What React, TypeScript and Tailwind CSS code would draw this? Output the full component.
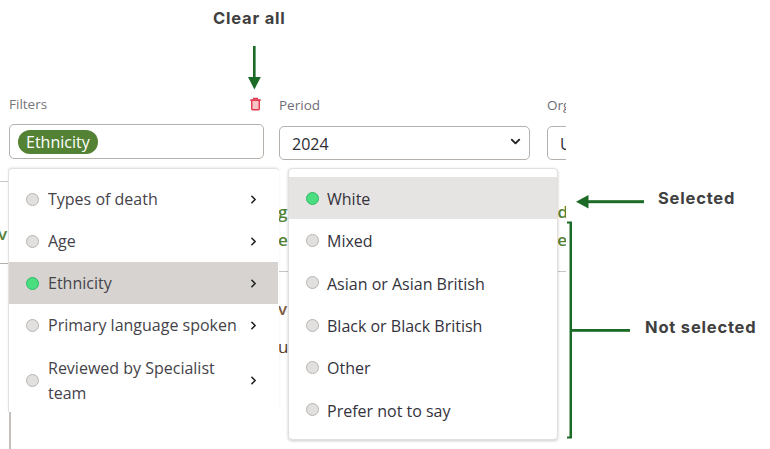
import { ChevronDown, ChevronRight } from "lucide-react";

const filters = [
  { label: "Types of death" },
  { label: "Age" },
  { label: "Ethnicity", active: true },
  { label: "Primary language spoken" },
  { label: "Reviewed by Specialist team", tall: true },
];

const options = [
  { label: "White", active: true },
  { label: "Mixed" },
  { label: "Asian or Asian British" },
  { label: "Black or Black British" },
  { label: "Other" },
  { label: "Prefer not to say" },
];

function Dot({ active }: { active?: boolean }) {
  return (
    <span
      className={
        active
          ? "w-[13px] h-[13px] shrink-0 rounded-full border border-[#2fb865] bg-[#4ade80]"
          : "w-[13px] h-[13px] shrink-0 rounded-full border border-[#b8b4b0] bg-[#e2e0de]"
      }
    />
  );
}

function TrashIcon() {
  return (
    <svg width="11" height="14" viewBox="0 0 12 14" fill="none" stroke="#e23a4e" strokeWidth="1.6">
      <path d="M4 2.4V0.9h4v1.5" />
      <path d="M0.2 2.8h11.6" />
      <path d="M1.9 3h8.2v9.2a1 1 0 0 1-1 1H2.9a1 1 0 0 1-1-1z" fill="#f8c4ca" />
    </svg>
  );
}

function PickSelect({ value }: { value: string }) {
  return (
    <div className="relative mt-[13px]">
      <select className="block w-full h-[34px] pl-[12px] pt-[2px] appearance-none bg-white border-[1.5px] border-[#b5b0ac] rounded-[5px] text-[16px] text-[#2c2c34]">
        <option>{value}</option>
      </select>
      <ChevronDown size={15} strokeWidth={3} className="absolute right-[7px] top-[8px] text-[#222]" />
    </div>
  );
}

export default function App() {
  return (
    <div className="relative w-[770px] h-[449px] overflow-hidden bg-white font-['Open_Sans',sans-serif]">
      {/* app screenshot part, cut off at the right */}
      <div className="relative w-[566px] h-full overflow-hidden pt-[96px]">
        <div className="flex pl-[9px] h-[64px]">
          <div className="w-[255px] shrink-0">
            <div className="flex items-center justify-between h-[16px] pr-[3px]">
              <label className="text-[13.5px] leading-4 text-[#77757a]">Filters</label>
              <TrashIcon />
            </div>
            <div className="mt-[12px] h-[35px] flex items-center px-[8px] bg-white border-[1.5px] border-[#b5b0ac] rounded-[5px]">
              <span className="h-[24px] px-[8px] flex items-center rounded-full bg-[#548235] text-white text-[16px] leading-none">
                Ethnicity
              </span>
            </div>
          </div>

          <div className="w-[251px] shrink-0 ml-[15px] pt-[1px]">
            <label className="block h-[16px] text-[13.5px] leading-4 text-[#6f6c78]">Period</label>
            <PickSelect value="2024" />
          </div>

          <div className="w-[200px] shrink-0 ml-[17px] pt-[1px]">
            <label className="block h-[16px] text-[13.5px] leading-4 text-[#6f6c78]">Organisation</label>
            <PickSelect value="University Hospital" />
          </div>
        </div>

        {/* page content showing round the menus */}
        <div className="flex">
          <div className="w-[278px] shrink-0 pt-[21px]">
            <div className="w-[9px] h-px bg-[#c9c7cc]" />
            <div className="mt-[40px] -ml-[2px] text-[17px] font-semibold leading-6 text-[#548235]">v</div>
            <div className="mt-[17px] w-[9px] h-px bg-[#b5b0ac]" />
            <div className="mt-[148px] ml-[9px] w-[2px] h-[37px] bg-[#c4c0bd]" />
          </div>
          <div className="w-[288px] shrink-0 pt-[40px] text-[17px] leading-6">
            <div className="flex justify-between font-semibold text-[#548235]">
              <span>g</span>
              <span className="-mr-[2px]">d</span>
            </div>
            <div className="mt-[4px] flex justify-between font-semibold text-[#548235]">
              <span>e</span>
              <span className="-mr-[1px]">e</span>
            </div>
            <div className="mt-[19px] h-px bg-[#c9c4c4]" />
            <div className="mt-[25px] font-semibold text-[#7c5a3c]">v</div>
            <div className="mt-[14px] text-[#5a3c28]">u</div>
          </div>
        </div>

        {/* filter menu */}
        <ul className="absolute left-[8px] top-[168px] w-[271px] h-[244px] pt-[9px] bg-white rounded-t-[4px] border-t border-l border-[#e4e2e0] shadow-[0_-1px_2px_rgba(0,0,0,0.08)]">
          {filters.map((f) => (
            <li
              key={f.label}
              className={
                "flex items-center w-[269px] pl-[17px] pr-[18px] text-[16px] leading-[25px] text-[#45434a] " +
                (f.tall ? "h-[69px] " : "h-[42px] ") +
                (f.active ? "bg-[#d6d3d0]" : "")
              }
            >
              <Dot active={f.active} />
              <span className="ml-[9px] flex-1 pr-[8px]">{f.label}</span>
              <ChevronRight size={13} strokeWidth={3} className="shrink-0 text-[#222]" />
            </li>
          ))}
        </ul>

        {/* options menu */}
        <ul className="absolute left-[288px] top-[168px] w-[270px] h-[272px] pt-[8px] bg-white rounded-[4px] border border-[#e2e0de] shadow-[0_1px_3px_rgba(0,0,0,0.2)]">
          {options.map((o) => (
            <li
              key={o.label}
              className={
                "flex items-center h-[42.3px] pl-[17px] text-[16px] text-[#34323c] " +
                (o.active ? "bg-[#e6e4e2]" : "")
              }
            >
              <Dot active={o.active} />
              <span className="ml-[8px] pt-[2px]">{o.label}</span>
            </li>
          ))}
        </ul>
      </div>

      {/* annotations */}
      <svg className="absolute inset-0" width="770" height="449" fill="#1b6b27" stroke="none">
        <rect x="253" y="46" width="2.6" height="32" />
        <path d="M248 77h12.8l-6.4 12.5z" />
        <rect x="588" y="200.2" width="56" height="3" />
        <path d="M576 201.7l12.5-6.7v13.4z" />
        <path d="M567 221.5h5v217h-5v-2h2.5V223.5H567z" />
        <rect x="571" y="329" width="59" height="2.8" />
      </svg>
      <span className="absolute left-[213px] top-[9px] text-[16.5px] tracking-[0.8px] leading-[18px] font-bold text-[#404040] font-['Inter',sans-serif]">Clear all</span>
      <span className="absolute left-[658px] top-[189px] text-[16.5px] tracking-[0.8px] leading-[18px] font-bold text-[#404040] font-['Inter',sans-serif]">Selected</span>
      <span className="absolute left-[645px] top-[318px] text-[16.5px] tracking-[0.8px] leading-[18px] font-bold text-[#404040] font-['Inter',sans-serif]">Not selected</span>
    </div>
  );
}
